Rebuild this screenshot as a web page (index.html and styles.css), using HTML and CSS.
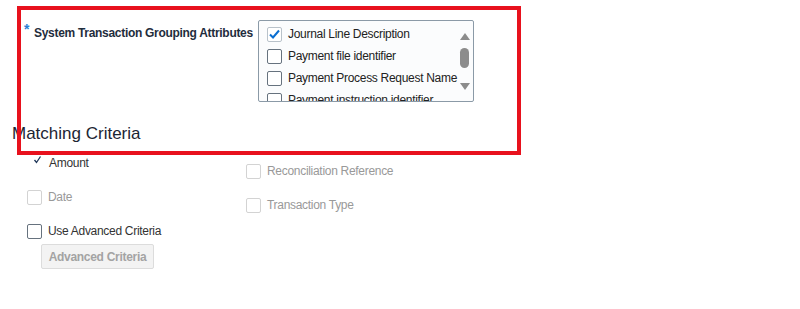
FILE: index.html
```html
<!DOCTYPE html>
<html lang="en">
<head>
    <meta charset="UTF-8">
    <title>Matching Criteria</title>
    <link rel="stylesheet" href="styles.css">
</head>
<body>
    <div class="page">
        <div class="field-row">
            <span class="required">*</span>
            <label class="field-label">System Transaction Grouping Attributes</label>
            <div class="listbox">
                <ul class="list-items">
                    <li><span class="cb checked"><svg viewBox="0 0 15 15" width="15" height="15"><path d="M3 7.5 L6 10.5 L12 3.5" fill="none" stroke="#0a6ed1" stroke-width="2"/></svg></span>Journal Line Description</li>
                    <li><span class="cb"></span>Payment file identifier</li>
                    <li><span class="cb"></span>Payment Process Request Name</li>
                    <li><span class="cb"></span>Payment instruction identifier</li>
                </ul>
                <svg class="scrollbar" width="18" height="79" viewBox="0 0 18 79">
                    <polygon points="5,19 15,19 10,12" fill="#8c8c8c"/>
                    <rect x="5" y="27" width="9" height="20" rx="4.5" fill="#8c8c8c"/>
                    <polygon points="5,62 15,62 10,69" fill="#8c8c8c"/>
                </svg>
            </div>
        </div>

        <h2 class="section-title">Matching Criteria</h2>

        <div class="criteria">
            <div class="criteria-col">
                <div class="crit-row"><span class="tick"><svg viewBox="0 0 15 15" width="15" height="15"><path d="M7.5 5 L9.5 7.5 L13.5 1.5" fill="none" stroke="#1d3557" stroke-width="1.3"/></svg></span><span class="crit-text">Amount</span></div>
                <div class="crit-row disabled"><span class="cb"></span><span class="crit-text">Date</span></div>
                <div class="crit-row"><span class="cb"></span><span class="crit-text">Use Advanced Criteria</span></div>
                <button class="btn-disabled">Advanced Criteria</button>
            </div>
            <div class="criteria-col right">
                <div class="crit-row disabled"><span class="cb"></span><span class="crit-text">Reconciliation Reference</span></div>
                <div class="crit-row disabled"><span class="cb"></span><span class="crit-text">Transaction Type</span></div>
            </div>
        </div>

        <div class="highlight-box"></div>
    </div>
</body>
</html>
```

FILE: styles.css
```css
body { margin: 0; padding: 0; background: #ffffff; font-family: 'Liberation Sans', Arial, sans-serif; font-size: 12px; letter-spacing: -0.3px; color: #333; }
.page { position: relative; width: 800px; height: 309px; overflow: hidden; }

.field-row { display: flex; align-items: flex-start; margin-top: 20px; padding-left: 24px; }
.required { color: #2a7fd4; font-size: 14px; font-weight: bold; line-height: 14px; width: 10px; margin-top: 2px; }
.field-label { font-weight: bold; color: #1f2d3d; line-height: 20px; margin-top: 3px; width: 224px; white-space: nowrap; }

.listbox { display: flex; width: 214px; height: 80px; border: 1px solid #8b9aa7; border-radius: 2px; background: #fbfcfd; overflow: hidden; }
.list-items { list-style: none; margin: 0; padding: 2px 0 0 8px; flex: 1; min-width: 0; }
.list-items li { display: flex; align-items: center; gap: 6px; height: 22px; white-space: nowrap; color: #222; }
.scrollbar { flex-shrink: 0; }

.cb { display: inline-block; width: 13px; height: 13px; border: 1px solid #66727e; border-radius: 2px; background: #fff; flex-shrink: 0; }
.cb.checked { border-color: #b9c2ca; }
.cb svg { display: block; margin: -1px; }

.section-title { font-size: 17px; font-weight: normal; letter-spacing: 0; line-height: 20px; color: #1c2533; margin: 22px 0 0 12px; }

.criteria { display: flex; margin-top: 9px; padding-left: 27px; }
.criteria-col { display: flex; flex-direction: column; gap: 14px; width: 219px; }
.criteria-col.right { padding-top: 8px; }
.crit-row { display: flex; align-items: center; height: 20px; }
.crit-row .cb { margin-right: 6px; }
.crit-row.disabled .cb { border-color: #d3d3d3; }
.crit-row.disabled .crit-text { color: #999; }
.tick { width: 15px; margin-right: 7px; }
.tick svg { display: block; margin-top: -2px; }

.btn-disabled { align-self: flex-start; margin: -11px 0 0 14px; height: 25px; width: 113px; padding: 0; border: 1px solid #dcdcdc; border-radius: 2px; background: #f3f3f3; color: #a3a3a3; font-family: 'Liberation Sans', Arial, sans-serif; font-size: 12px; letter-spacing: -0.3px; font-weight: bold; }

.highlight-box { position: absolute; left: 17px; top: 6px; width: 496px; height: 141px; border: 4px solid #e8111d; }
```
